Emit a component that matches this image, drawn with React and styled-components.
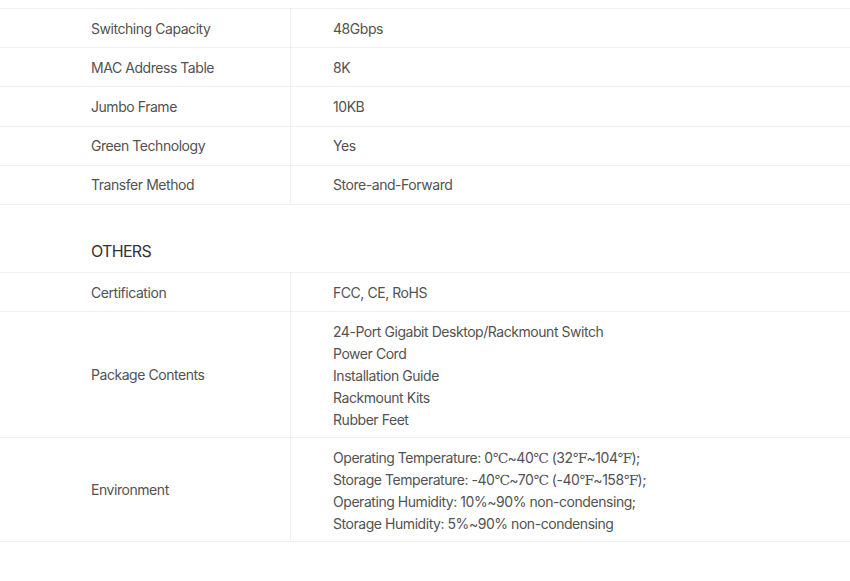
import styled, { createGlobalStyle } from "styled-components";

const GlobalStyle = createGlobalStyle`
    body {
        margin: 0;
        background: #FFFFFF;
        font-family: 'Inter', 'Liberation Sans', sans-serif;
    }
`;

const performance = [
    { label: "Switching Capacity", value: ["48Gbps"] },
    { label: "MAC Address Table", value: ["8K"] },
    { label: "Jumbo Frame", value: ["10KB"] },
    { label: "Green Technology", value: ["Yes"] },
    { label: "Transfer Method", value: ["Store-and-Forward"] },
];

const others = [
    { label: "Certification", value: ["FCC, CE, RoHS"] },
    {
        label: "Package Contents",
        value: [
            "24-Port Gigabit Desktop/Rackmount Switch",
            "Power Cord",
            "Installation Guide",
            "Rackmount Kits",
            "Rubber Feet",
        ],
    },
    {
        label: "Environment",
        value: [
            "Operating Temperature: 0℃~40℃ (32℉~104℉);",
            "Storage Temperature: -40℃~70℃ (-40℉~158℉);",
            "Operating Humidity: 10%~90% non-condensing;",
            "Storage Humidity: 5%~90% non-condensing",
        ],
    },
];

// the degree signs come out in a serif face on the original page
const withUnits = (line) =>
    line.split(/([℃℉])/).map((part, i) =>
        part === "℃" || part === "℉" ? <Unit key={i}>{part}</Unit> : part
    );

function SpecTable({ rows }) {
    return (
        <Table>
            {rows.map((row) => (
                <Row key={row.label}>
                    <Label>{row.label}</Label>
                    <Value $multi={row.value.length > 1}>
                        {row.value.map((line) => <p key={line}>{withUnits(line)}</p>)}
                    </Value>
                </Row>
            ))}
        </Table>
    );
}

export default function App() {
    return (
        <Page>
            <GlobalStyle />
            <Spacer />
            <SpecTable rows={performance} />
            <Heading>OTHERS</Heading>
            <SpecTable rows={others} />
        </Page>
    );
}

const Page = styled.div`
    width: 850px;
    height: 581px;
    overflow: hidden;
`;

const Spacer = styled.div`
    height: 8px;
`;

const Table = styled.div`
    width: 100%;
    border-top: 1px solid #F0F0F0;
`;

const Row = styled.div`
    display: flex;
    align-items: stretch;
    min-height: 39.2px;
    box-sizing: border-box;
    border-bottom: 1px solid #F0F0F0;
`;

const Label = styled.div`
    width: 291px;
    box-sizing: border-box;
    padding: 8px 0 7px 91px;
    display: flex;
    align-items: center;
    border-right: 1px solid #F0F0F0;
    font-size: 14px;
    line-height: 22px;
    letter-spacing: -0.45px;
    color: #525252;
`;

const Value = styled.div`
    flex: 1;
    display: flex;
    flex-direction: column;
    justify-content: center;
    padding: ${(p) => (p.$multi ? "9px 0 6px 42px" : "8px 0 7px 42px")};
    font-size: 14px;
    line-height: 22px;
    letter-spacing: -0.45px;
    color: #525252;

    p {
        margin: 0;
        height: 22px;
    }
`;

const Unit = styled.span`
    font-family: 'Liberation Serif', 'DejaVu Serif', serif;
    font-size: 14px;
    letter-spacing: -0.8px;
    line-height: 1;
`;

const Heading = styled.h3`
    margin: 0;
    padding: 35px 0 0 91px;
    height: 67px;
    box-sizing: border-box;
    font-size: 16px;
    font-weight: 400;
    line-height: 22px;
    letter-spacing: -0.7px;
    color: #333333;
`;
